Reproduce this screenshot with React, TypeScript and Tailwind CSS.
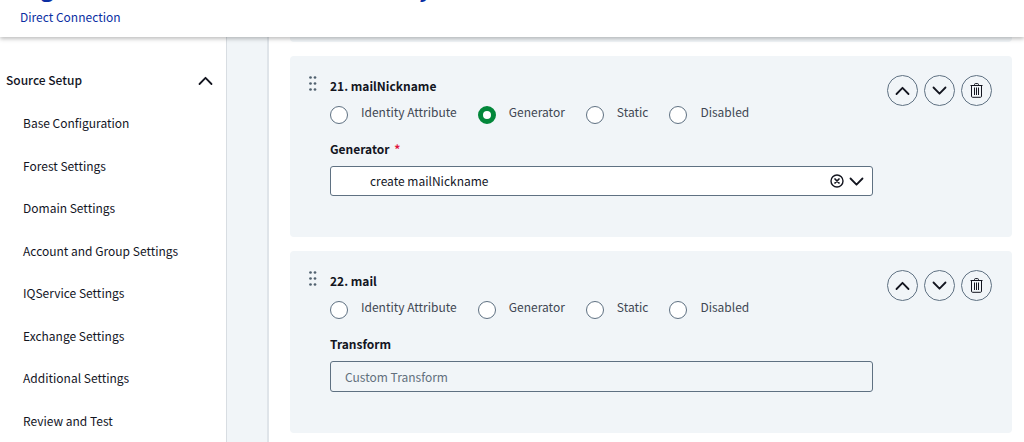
import React, { useState } from "react";

const navItems = [
  "Base Configuration",
  "Forest Settings",
  "Domain Settings",
  "Account and Group Settings",
  "IQService Settings",
  "Exchange Settings",
  "Additional Settings",
  "Review and Test",
];

const options = ["Identity Attribute", "Generator", "Static", "Disabled"];

const Chevron = ({ up = false }: { up?: boolean }) => (
  <svg width="15" height="15" viewBox="0 0 15 15" fill="none" stroke="currentColor" strokeWidth="1.8" strokeLinecap="round" strokeLinejoin="round">
    <path d={up ? "M1.5 11 7.5 4.8l6 6.2" : "M1.5 4.5l6 6.2 6-6.2"} />
  </svg>
);

const TrashIcon = () => (
  <svg width="13" height="15" viewBox="0 0 13 15" fill="none" stroke="currentColor" strokeWidth="1">
    <path d="M.5 2.5h12M4.5 2.5v-1c0-.5.3-.9.8-.9h2.4c.5 0 .8.4.8.9v1M1.5 2.5v10.7c0 .7.4 1.1 1 1.1h8c.6 0 1-.4 1-1.1V2.5M4.5 4.5v7.5M6.5 4.5v7.5M8.5 4.5v7.5" />
  </svg>
);

const ClearIcon = () => (
  <svg width="14" height="14" viewBox="0 0 14 14" fill="none" stroke="currentColor" strokeWidth="1.4" strokeLinecap="round">
    <circle cx="7" cy="7" r="6" />
    <path d="M5 5l4 4M9 5l-4 4" strokeWidth="1.7" />
  </svg>
);

const DragHandle = () => (
  <svg className="mt-5 shrink-0" width="8" height="16" viewBox="0 0 8 16" fill="#51616f">
    {[1.5, 7.5, 13.5].map((y) => (
      <React.Fragment key={y}>
        <circle cx="1.5" cy={y} r="1.35" />
        <circle cx="6" cy={y} r="1.35" />
      </React.Fragment>
    ))}
  </svg>
);

const RoundButton = ({ label, children }: { label: string; children: React.ReactNode }) => (
  <button
    type="button"
    aria-label={label}
    className="flex size-[31px] items-center justify-center rounded-full border border-[#5f7182] text-[#13151f] hover:bg-white"
  >
    {children}
  </button>
);

type CardProps = {
  id: string;
  title: string;
  initial?: string;
  children: React.ReactNode;
};

const AttributeCard = ({ id, title, initial = "", children }: CardProps) => {
  const [type, setType] = useState(initial);

  return (
    <section className="flex rounded bg-[#f1f5f8] pr-5 pb-[41px] pl-[19px]">
      <DragHandle />
      <div className="ml-[13px] flex-1 pt-5">
        <h3 className="font-bold">{title}</h3>
        <div className="mt-1.5 flex gap-[21px]">
          {options.map((option) => (
            <label key={option} className="flex gap-[13px] text-[#3f4753]">
              <input
                type="radio"
                name={id}
                value={option}
                checked={type === option}
                onChange={() => setType(option)}
                className="mt-1 size-[18px] appearance-none rounded-full border border-[#5f7182] bg-white checked:border-5 checked:border-[#03873a]"
              />
              {option}
            </label>
          ))}
        </div>
        {children}
      </div>
      <div className="ml-3.5 flex gap-1.5 pt-[19px]">
        <RoundButton label="Move up">
          <Chevron up />
        </RoundButton>
        <RoundButton label="Move down">
          <Chevron />
        </RoundButton>
        <RoundButton label="Delete">
          <TrashIcon />
        </RoundButton>
      </div>
    </section>
  );
};

const App = () => {
  return (
    <div className="flex h-screen flex-col overflow-hidden bg-white font-['Noto_Sans_CJK_SC',sans-serif] text-[12px] leading-5 text-[#13151f]">
      {/* Header */}
      <header className="z-10 flex h-[37px] shrink-0 flex-col justify-end bg-white px-5 pb-2.5 text-[#0b2fa3] shadow-[0_2px_4px_rgba(0,0,0,0.25)]">
        <h1 className="mb-1 text-[22px] leading-8 font-bold">Sign-in Domain Host - Active Directory</h1>
        <a href="#">Direct Connection</a>
      </header>

      <div className="flex flex-1 bg-[#f1f5f8]">
        {/* Sidebar */}
        <nav className="w-[227px] shrink-0 border-r border-[#d8dde2] bg-white pt-[33px]">
          <button type="button" className="flex w-full items-center justify-between pr-[13px] pl-1.5 font-medium">
            Source Setup
            <Chevron up />
          </button>
          <ul className="mt-3 grid h-[340px] auto-rows-fr">
            {navItems.map((item) => (
              <li key={item} className="flex items-center pl-[23px]">
                <a href="#">{item}</a>
              </li>
            ))}
          </ul>
        </nav>

        {/* Attribute list */}
        <main className="ml-10 flex flex-1 flex-col gap-3.5 border-l-2 border-[#dfe4e9] bg-white pr-3 pl-[21px]">
          <div className="h-[5px] rounded-b bg-[#f1f5f8]" />

          <AttributeCard id="mailNickname" title="21. mailNickname" initial="Generator">
            <label htmlFor="generator" className="mt-[15px] block font-bold">
              Generator <span className="ml-0.5 text-[#e0123c]">*</span>
            </label>
            <div className="relative mt-[7px]">
              <select
                id="generator"
                className="block h-[30px] w-full appearance-none rounded-[3px] border border-[#5f7182] bg-white pl-[39px]"
              >
                <option>create mailNickname</option>
              </select>
              <div className="pointer-events-none absolute inset-y-0 right-[9px] flex items-center gap-[5px]">
                <button type="button" aria-label="Clear" className="pointer-events-auto">
                  <ClearIcon />
                </button>
                <Chevron />
              </div>
            </div>
          </AttributeCard>

          <AttributeCard id="mail" title="22. mail">
            <label htmlFor="transform" className="mt-[15px] block font-bold">
              Transform
            </label>
            <input
              id="transform"
              type="text"
              placeholder="Custom Transform"
              className="mt-[7px] block h-[31px] w-full rounded-[3px] border border-[#5f7182] px-3.5 placeholder:text-[#62707d]"
            />
          </AttributeCard>
        </main>
      </div>
    </div>
  );
};

export default App;
